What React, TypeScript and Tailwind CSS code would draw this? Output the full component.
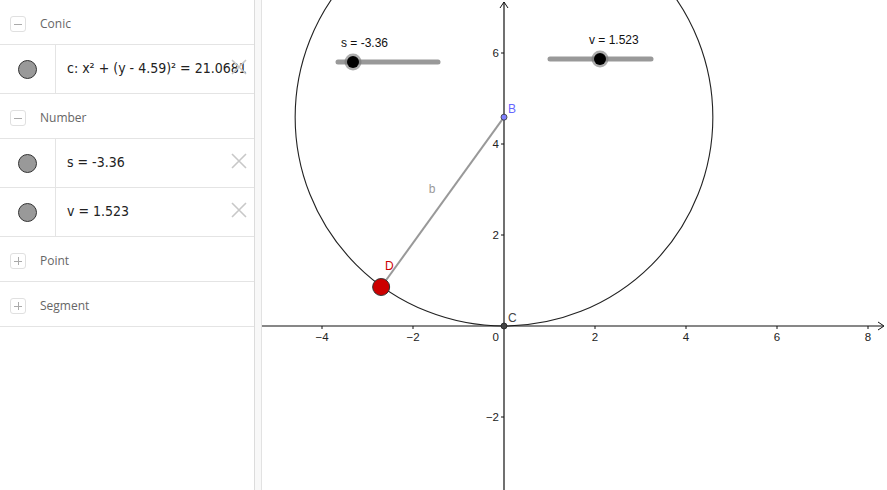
import React from "react";

const ox = 504;
const oy = 326;
const u = 45.5;

function HeaderRow({ label, open }: { label: string; open: boolean }) {
  return (
    <div className="flex h-[45px] items-center border-b border-[#e4e4e4] pt-[4px]">
      <div className="ml-[10px] flex h-[16px] w-[16px] items-center justify-center rounded-[3px] border border-[#e0e0e0]">
        {open ? (
          <div className="h-[1px] w-[8px] bg-[#aaa]" />
        ) : (
          <div className="relative h-[8px] w-[8px]">
            <div className="absolute left-0 top-[3.5px] h-[1px] w-[8px] bg-[#aaa]" />
            <div className="absolute left-[3.5px] top-0 h-[8px] w-[1px] bg-[#aaa]" />
          </div>
        )}
      </div>
      <span className="ml-[14px] text-[12px] text-[#666]">{label}</span>
    </div>
  );
}

function ItemRow({ children }: { children: React.ReactNode }) {
  return (
    <div className="flex h-[49px] border-b border-[#e4e4e4]">
      <div className="flex w-[56px] shrink-0 items-center justify-center border-r border-[#e4e4e4]">
        <div className="h-[19px] w-[19px] rounded-full border border-[#333] bg-[#999]" />
      </div>
      <div className="relative flex min-w-0 flex-1 items-center overflow-hidden pb-[2px] pl-[11px]">
        <span
          className="whitespace-nowrap text-[14px] text-[#222]"
          style={{ fontFamily: "'DejaVu Sans Condensed', 'Liberation Sans Narrow', 'Liberation Sans', sans-serif" }}
        >
          {children}
        </span>
        <svg className="absolute right-[7px] top-[14px]" width="16" height="16" viewBox="0 0 16 16">
          <path d="M1 1 L15 15 M15 1 L1 15" stroke="#c8c8c8" strokeWidth="1.6" />
        </svg>
      </div>
    </div>
  );
}

function Graph() {
  const xs = [-4, -2, 2, 4, 6, 8];
  const ys = [6, 4, 2, -2];
  const cy = oy - 4.59 * u;
  const r = Math.sqrt(21.0681) * u;
  const dx = ox - 2.7 * u;
  const dy = oy - 0.857 * u;
  return (
    <svg className="h-full w-full" viewBox="262 0 625 490" style={{ fontFamily: "'Liberation Sans', Arial, sans-serif" }}>
      <circle cx={ox} cy={cy} r={r} fill="none" stroke="#222" strokeWidth="1.1" />
      <line x1="262" y1={oy} x2="883" y2={oy} stroke="#111" strokeWidth="1.2" />
      <path d="M878 322 L884 326 L878 330" fill="none" stroke="#111" strokeWidth="1" />
      <line x1={ox} y1="490" x2={ox} y2="2" stroke="#111" strokeWidth="1.2" />
      <path d="M500 8 L504 2 L508 8" fill="none" stroke="#111" strokeWidth="1" />
      {xs.map((v) => (
        <g key={v}>
          <line x1={ox + v * u} y1={oy} x2={ox + v * u} y2={oy + 3} stroke="#111" />
          <text x={ox + v * u} y={oy + 15} fontSize="11.5" textAnchor="middle" fill="#222">
            {v < 0 ? `\u2212${-v}` : v}
          </text>
        </g>
      ))}
      <text x={ox - 5} y={oy + 15} fontSize="11.5" textAnchor="end" fill="#222">0</text>
      {ys.map((v) => (
        <g key={v}>
          <line x1={ox - 3} y1={oy - v * u} x2={ox} y2={oy - v * u} stroke="#111" />
          <text x={ox - 5} y={oy - v * u + 4} fontSize="11.5" textAnchor="end" fill="#222">
            {v < 0 ? `\u2212${-v}` : v}
          </text>
        </g>
      ))}
      <line x1={dx} y1={dy} x2={ox} y2={cy} stroke="#999" strokeWidth="2" />
      <text x="432" y="193" fontSize="12" fill="#999" textAnchor="middle">b</text>
      <circle cx={ox} cy={cy} r="3" fill="#8080ff" stroke="#333" strokeWidth="0.8" />
      <text x="508" y="113" fontSize="12" fill="#6666ff">B</text>
      <circle cx={ox} cy={oy} r="3" fill="#444" stroke="#222" strokeWidth="0.8" />
      <text x="508" y="322" fontSize="12" fill="#444">C</text>
      <circle cx={dx} cy={dy} r="8.5" fill="#cc0000" stroke="#333" strokeWidth="1" />
      <text x="385" y="270" fontSize="12" fill="#cc0000">D</text>

      <text x="341" y="47" fontSize="12" fill="#111">s = -3.36</text>
      <line x1="338" y1="62" x2="438" y2="62" stroke="#999" strokeWidth="5" strokeLinecap="round" />
      <circle cx="353" cy="62" r="8.5" fill="#777" opacity="0.6" />
      <circle cx="353" cy="62" r="6" fill="#000" />

      <text x="589" y="44" fontSize="12" fill="#111">v = 1.523</text>
      <line x1="550" y1="59" x2="651" y2="59" stroke="#999" strokeWidth="5" strokeLinecap="round" />
      <circle cx="600" cy="59" r="8.5" fill="#777" opacity="0.6" />
      <circle cx="600" cy="59" r="6" fill="#000" />
    </svg>
  );
}

export default function App() {
  return (
    <div
      className="flex h-[490px] w-[887px] overflow-hidden bg-white"
      style={{ fontFamily: "'Open Sans', 'Noto Sans', sans-serif" }}
    >
      <div className="w-[255px] shrink-0 border-r border-[#dcdcdc]">
        <HeaderRow label="Conic" open />
        <ItemRow>
          c: x² + (y - 4.59)² = 21.0681
        </ItemRow>
        <HeaderRow label="Number" open />
        <ItemRow>s = -3.36</ItemRow>
        <ItemRow>v = 1.523</ItemRow>
        <HeaderRow label="Point" open={false} />
        <HeaderRow label="Segment" open={false} />
      </div>
      <div className="w-[7px] shrink-0 border-r border-[#e2e2e2] bg-[#f8f8f8]" />
      <div className="min-w-0 flex-1">
        <Graph />
      </div>
    </div>
  );
}
